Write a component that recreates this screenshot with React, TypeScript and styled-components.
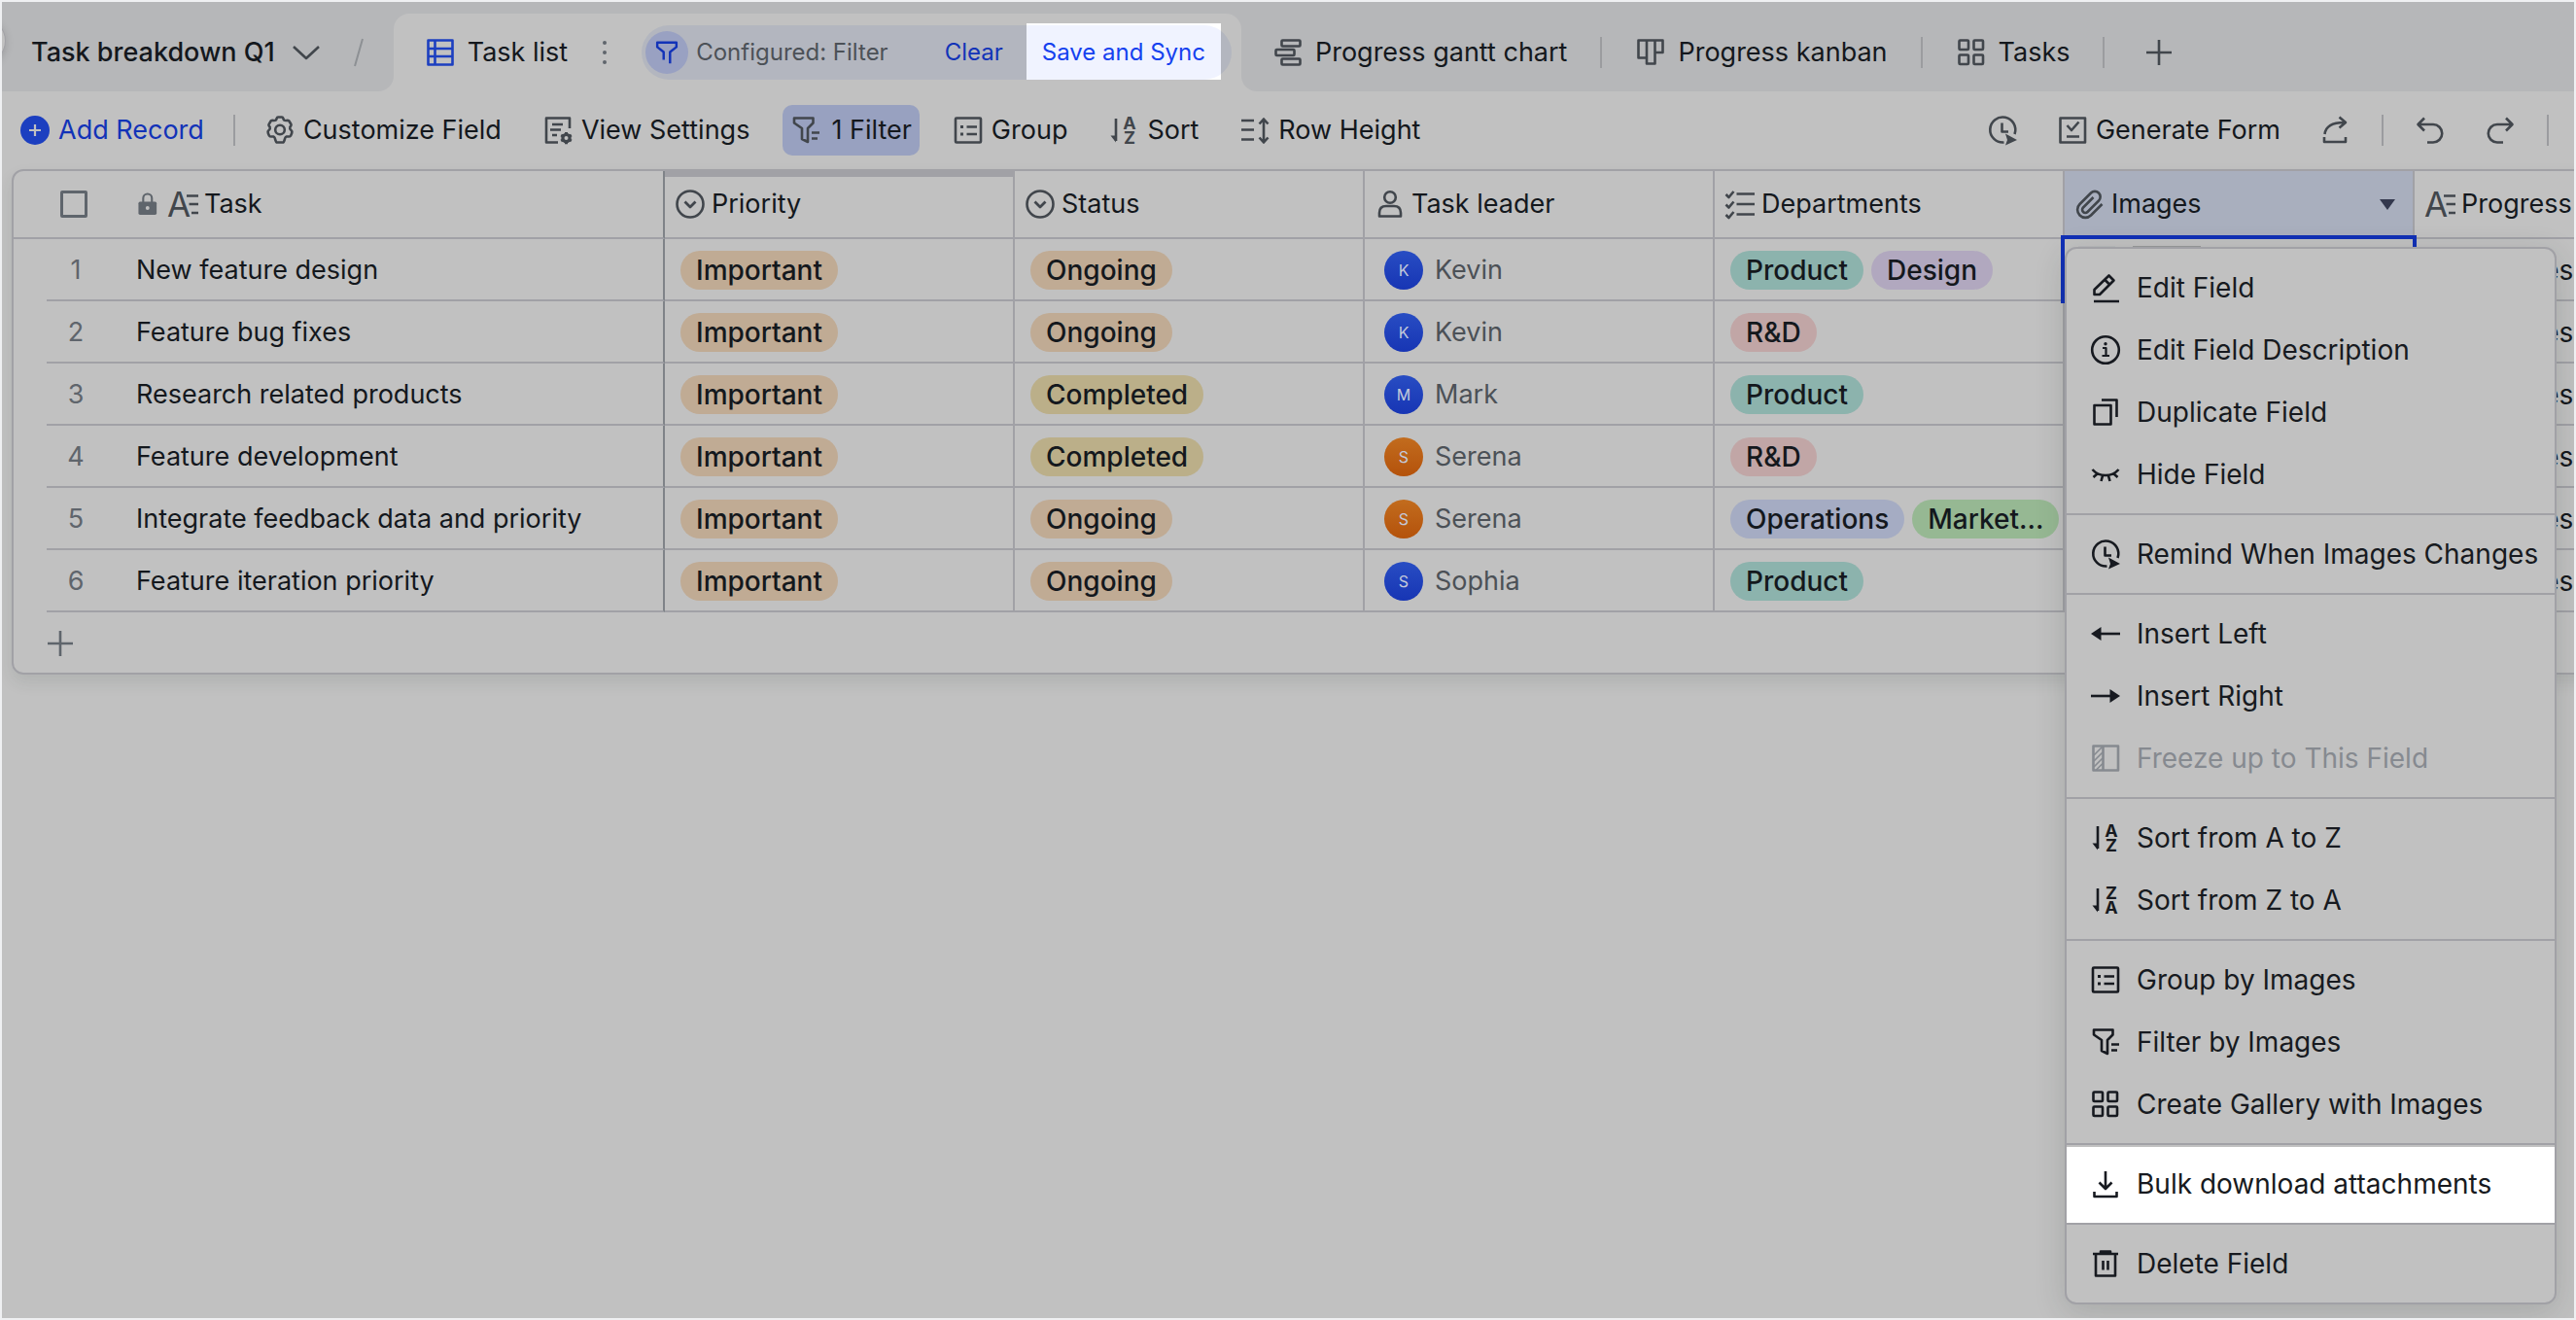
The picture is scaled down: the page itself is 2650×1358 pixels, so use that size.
import React from 'react';
import styled, { createGlobalStyle, css } from 'styled-components';

const c = {
  page: '#c1c1c1',
  bar: '#b6b7b9',
  line: '#a1a1a6',
  lineStrong: '#7f8388',
  text: '#14181d',
  muted: '#4c5157',
  icon: '#41464c',
  faint: '#5f656c',
  blue: '#1233b8',
  disabled: '#868a90',
};

const GlobalStyle = createGlobalStyle`
  *, *::before, *::after { box-sizing: border-box; }
  body { margin: 0; background: #eff0f2; font-family: Inter, "Liberation Sans", sans-serif; font-size: 27px; line-height: 40px; color: ${c.text}; }
  button { font: inherit; color: inherit; background: none; border: 0; padding: 0; margin: 0; cursor: pointer; }
`;

/* ---------- icons ---------- */

const Svg = styled.svg<{ $size?: number }>`
  display: block;
  flex: none;
  width: ${(p) => p.$size ?? 32}px;
  height: ${(p) => p.$size ?? 32}px;
  overflow: visible;
  fill: none;
  stroke: currentColor;
  stroke-width: 2.6;
  stroke-linejoin: round;
`;

const Glyph = styled.text`
  fill: currentColor;
  stroke: none;
  font-family: Inter, sans-serif;
  text-anchor: middle;
`;

const solid = { fill: 'currentColor', stroke: 'none' };

const shapes: Record<string, React.ReactNode> = {
  chevron: <path d="M3 10l13 12 13-12" />,
  slash: <path d="M20 2l-8 28" strokeWidth="2" />,
  table: <path d="M3.5 3.5h25v25h-25zM10.5 3.5v25M3.5 12h25M3.5 20h25" />,
  dots: (
    <g {...solid}>
      <circle cx="16" cy="6" r="2" />
      <circle cx="16" cy="16" r="2" />
      <circle cx="16" cy="26" r="2" />
    </g>
  ),
  funnel: <path d="M12.5 24v-8.5L5.5 10V5h21v5l-7 5.5V28" />,
  gantt: (
    <g>
      <rect x="9.5" y="3.5" width="19" height="6" rx="1" />
      <rect x="3.5" y="13" width="19" height="6" rx="1" />
      <rect x="9.5" y="22.5" width="19" height="6" rx="1" />
    </g>
  ),
  kanban: <path d="M3.5 3.5h25V16h-8V27.5h-8.5V21.5H3.5zM12 3.5v18M20.5 3.5V16" />,
  grid: (
    <g>
      <rect x="3.5" y="3.5" width="9.5" height="9.5" rx="1" />
      <rect x="18.5" y="3.5" width="9.5" height="9.5" rx="1" />
      <rect x="3.5" y="18.5" width="9.5" height="9.5" rx="1" />
      <rect x="18.5" y="18.5" width="9.5" height="9.5" rx="1" />
    </g>
  ),
  plus: <path d="M16 3v26M3 16h26" />,
  addCircle: (
    <g>
      <circle cx="16" cy="16" r="15" {...solid} />
      <path d="M16 10v12M10 16h12" stroke={c.page} strokeWidth="2.2" />
    </g>
  ),
  gear: (
    <g>
      <path d="M11.800 5.500C12.800 4.500 12.500 2.500 14 2.500h4c1.500 0 1.200 2 2.200 3 1.300 1.100 3.700-.2 5 .8l2.200 3.500c.9 1.500-.9 2-1.200 3.500-.6 2.200 2.200 2.600 2.200 4.200s-.6 2.600-1.400 4.200c-.8 1.400-2.800.6-4.300.9-2.300.5-1.700 5.900-3.700 5.900h-6c-2 0-1.400-5.400-3.700-5.900-1.500-.3-3.500.5-4.300-.9-.8-1.600-1.400-2.600-1.400-4.200s2.800-2 2.200-4.200c-.3-1.500-2.100-2-1.200-3.500l2.200-3.500c1.300-1 3.700.3 5-.8z" />
      <circle cx="16" cy="15.5" r="4.800" />
    </g>
  ),
  viewSettings: (
    <g>
      <path d="M28 14V3.5H4v25h12M10 10h11M8 15.5h11M10 21h5" />
      <circle cx="24.5" cy="24" r="3.600" strokeWidth="3.200" />
      <path
        d="M24.5 18v2M24.5 28v2.200M19.200 21l1.800 1M28 26l1.800 1M19.200 27l1.800-1M28 22l1.800-1"
        strokeWidth="3"
      />
    </g>
  ),
  filter: <path d="M4 3.5h19.5v5L18 14v14l-6-3V14L4 8.500zM22 18.5h8M22 24.5h6" />,
  group: (
    <g>
      <rect x="3" y="3.5" width="26" height="25" rx="1" />
      <path d="M14.5 12.5H25M14.5 20H25" />
      <path d="M8 12.5h3M8 20h3" strokeWidth="3" />
    </g>
  ),
  sortAZ: (
    <g>
      <path d="M8 4v23" />
      <path d="M2.5 21.5h5.5v7z" {...solid} />
      <Glyph x="22" y="15" fontSize="18" fontWeight="700">A</Glyph>
      <Glyph x="22" y="30" fontSize="18" fontWeight="700">Z</Glyph>
    </g>
  ),
  sortZA: (
    <g>
      <path d="M8 4v23" />
      <path d="M2.5 21.5h5.5v7z" {...solid} />
      <Glyph x="22" y="15" fontSize="18" fontWeight="700">Z</Glyph>
      <Glyph x="22" y="30" fontSize="18" fontWeight="700">A</Glyph>
    </g>
  ),
  rowHeight: <path d="M2 6h13M2 15.5h13M2 25.5h13M25 5v23M20.5 9.5 25 4.5l4.5 5M20.5 23.5l4.5 5 4.5-5" />,
  remind: (
    <g>
      <path d="M28.5 20a13 13 0 1 0-11 8.500M15.5 8.500v9H22" />
      <path d="M19 19.5 31 26l-12 5.5 2-5.500z" {...solid} />
    </g>
  ),
  form: <path d="M3.5 3.5h25.5v25H3.500zM10.5 11l4.5 5 7.5-8.500M10 22.5h13" />,
  share: <path d="M5 23v5h22v-5M5.5 20c1-8 7.5-12 20-12M20.5 2.5l6.5 5.5-6.5 5.5" />,
  undo: <path d="M10 3.5 3.5 10l6.5 6.5M4 10h15a9 9 0 0 1 0 18.5h-6" />,
  redo: <path d="M22 3.5 28.5 10 22 16.5M28 10H13a9 9 0 0 0 0 18.5h6" />,
  lock: (
    <g color={c.faint}>
      <rect x="3" y="13" width="23" height="16.5" rx="2" {...solid} />
      <path d="M9 14V8.500a5.5 5.5 0 0 1 11 0V14" />
      <circle cx="14.5" cy="21" r="2.400" fill={c.page} stroke="none" />
    </g>
  ),
  text: (
    <g>
      <Glyph x="12" y="28.5" fontSize="35">A</Glyph>
      <path d="M20 7.500h12M22.500 16h9.500M25 25h7" />
    </g>
  ),
  select: (
    <g>
      <circle cx="16" cy="16" r="13.5" />
      <path d="M10.5 13.5 16 19l5.5-5.5" strokeWidth="2.8" />
    </g>
  ),
  person: (
    <g>
      <circle cx="16" cy="9" r="5.800" />
      <path d="M5 28.5V25c0-5 3-7 7-7h8c4 0 7 2 7 7v3.500z" />
    </g>
  ),
  checks: (
    <path d="M12.5 5.5H31M12.5 16H31M12.5 26.5H31M1.5 6l3 3L9.5 3M1.5 16.5l3 3 5-6M1.5 27l3 3 5-6" />
  ),
  clip: (
    <path d="M28.5 16 17 27.5a8 8 0 0 1-11.5-11.5L17 4.500a5.600 5.600 0 0 1 8 8L13.5 24a3 3 0 0 1-4.5-4.5L19.5 9" />
  ),
  caret: <path d="M8 11h16l-8 11z" {...solid} />,
  edit: <path d="M4 30h26M4.5 18 19.5 3.5l5 5L10 23H4.500zM15.5 8l5 5" />,
  info: (
    <g>
      <circle cx="16" cy="16" r="13.800" />
      <path d="M13 14h3.500v8M12.5 22h7.500" strokeWidth="2.2" />
      <circle cx="16" cy="9.800" r="1.700" {...solid} />
    </g>
  ),
  duplicate: <path d="M4.5 9h17v19.5h-17zM12 3.5h15.5V21" />,
  hide: <path d="M2.5 11c7 8 20 8 27 0M8 15l-4.5 4M24 15l4.5 4M13 17.5l-1.5 5.5M19 17.5l1.5 5.5" />,
  left: (
    <g>
      <path d="M10 16h21" />
      <path d="M1 16 11.5 9v14z" {...solid} />
    </g>
  ),
  right: (
    <g>
      <path d="M1 16h21" />
      <path d="M31 16 20.5 9v14z" {...solid} />
    </g>
  ),
  freeze: (
    <g>
      <path d="M3.5 3.5h25.5v25H3.500zM13.5 3.500v25" />
      <path d="M4 13l9-9M4 19l9-9M4 25l9-9M6 28.5l7-7" strokeWidth="1.600" />
    </g>
  ),
  download: <path d="M16 3v18M9.5 14.5 16 21l6.5-6.5M4.5 24v5h23v-5" />,
  trash: <path d="M3 6h26M11 5V3.5h10V5M6 6.500v22h20v-22M13.5 13v9.500M18.5 13v9.500" />,
};

const Icon = ({ name, size }: { name: string; size?: number }) => (
  <Svg viewBox="0 0 32 32" $size={size} aria-hidden="true">
    {shapes[name]}
  </Svg>
);

/* ---------- frame and view tabs ---------- */

const Frame = styled.main`
  min-height: 100vh;
  border: 2px solid #eff0f2;
  background: ${c.page};
  overflow: hidden;
`;

const Header = styled.header`
  display: flex;
  height: 92px;
  border-top: 12px solid ${c.bar};
  white-space: nowrap;
`;

const TitleArea = styled.div`
  position: relative;
  display: flex;
  align-items: center;
  gap: 22px;
  padding: 0 20px 0 30px;
  background: ${c.bar};
  border-radius: 0 0 16px 0;
  color: #8d9094;
`;

const CollapseKnob = styled.span`
  position: absolute;
  left: -44px;
  top: 4px;
  width: 48px;
  height: 48px;
  border-radius: 50%;
  background: ${c.page};
  border: 1px solid ${c.line};
  box-shadow: 0 2px 8px rgba(0, 0, 0, 0.15);
`;

const TitleButton = styled.button`
  display: flex;
  align-items: center;
  gap: 16px;
  font-weight: 500;
  color: ${c.text};
  svg { color: ${c.icon}; }
`;

const TabSlot = styled.div`
  background: linear-gradient(${c.bar} 50%, ${c.page} 50%);
`;

const ActiveTab = styled.div`
  display: flex;
  align-items: center;
  height: 100%;
  padding: 0 10px 0 32px;
  background: ${c.page};
  border-radius: 16px 16px 0 0;
`;

const ViewButton = styled.button<{ $active?: boolean }>`
  display: flex;
  align-items: center;
  gap: 12px;
  svg { color: ${(p) => (p.$active ? '#1c3fc0' : c.icon)}; }
`;

const MoreButton = styled.button`
  margin: 0 22px;
  color: ${c.faint};
`;

const Pill = styled.div`
  display: flex;
  align-items: center;
  height: 56px;
  padding: 0 11px 0 4px;
  border-radius: 28px;
  background: #b3b6bf;
  font-size: 24px;
  color: ${c.muted};
`;

const PillBadge = styled.span`
  display: grid;
  place-items: center;
  width: 44px;
  height: 44px;
  margin-right: 8px;
  border-radius: 50%;
  background: #99a1c2;
  color: ${c.blue};
`;

const ClearButton = styled.button`
  margin: 0 24px 0 58px;
  color: ${c.blue};
`;

const SaveButton = styled.button`
  position: relative;
  isolation: isolate;
  overflow: hidden;
  height: 58px;
  margin-top: -2px;
  padding: 2px 16px 0;
  background: #fff;
  color: #1541ef;
  &::before {
    content: '';
    position: absolute;
    z-index: -1;
    inset: 2px -11px 0 0;
    border-radius: 0 28px 28px 0;
    background: #f0f3ff;
  }
`;

const OtherTabs = styled.nav`
  flex: 1;
  display: flex;
  align-items: center;
  gap: 34px;
  padding-left: 32px;
  background: ${c.bar};
  border-radius: 0 0 0 16px;
`;

const Rule = styled.span`
  flex: none;
  width: 2px;
  height: 32px;
  background: #9b9c9f;
`;

const AddView = styled.button`
  margin-left: 6px;
  color: ${c.icon};
`;

/* ---------- toolbar ---------- */

const Toolbar = styled.div`
  display: flex;
  align-items: center;
  gap: 26px;
  height: 80px;
  padding: 0 26px 0 10px;
  white-space: nowrap;
`;

const Spacer = styled.span`
  flex: 1;
`;

const Tool = styled.button<{ $tone?: 'primary' | 'active' }>`
  display: flex;
  align-items: center;
  gap: 8px;
  height: 52px;
  padding: 0 8px;
  border-radius: 10px;
  svg { color: ${c.icon}; }
  ${(p) => p.$tone === 'primary' && css`
    color: ${c.blue};
    svg { color: #1c3fc0; }
  `}
  ${(p) => p.$tone === 'active' && css`
    gap: 10px;
    background: #98a1c0;
  `}
`;

const ToolGroup = styled.div<{ $tight?: boolean }>`
  display: flex;
  align-items: center;
  gap: ${(p) => (p.$tight ? 22 : 24)}px;
`;

/* ---------- grid ---------- */

const Sheet = styled.section`
  width: max-content;
  min-width: 100%;
  margin-left: 10px;
  border: 2px solid ${c.line};
  border-radius: 12px;
  box-shadow: 0 8px 16px rgba(40, 60, 50, 0.1);
`;

const Grid = styled.table`
  table-layout: fixed;
  width: 2830px;
  border-collapse: separate;
  border-spacing: 0;
`;

const IndexCol = styled.col`
  width: 94px;
`;
const TaskCol = styled.col`
  width: 576px;
`;
const FieldCol = styled.col`
  width: 360px;
`;

const Th = styled.th<{ $frozen?: boolean; $handle?: boolean; $selected?: boolean }>`
  position: relative;
  height: 70px;
  padding: 0 0 0 ${(p) => (p.$frozen ? 32 : 10)}px;
  border-right: 2px solid ${(p) => (p.$frozen ? c.lineStrong : c.line)};
  border-bottom: 2px solid ${c.line};
  font-weight: 400;
  text-align: left;
  ${(p) => p.$handle && css`box-shadow: inset 0 6px 0 ${c.line};`}
  ${(p) => p.$selected && css`background: #a9afbe;`}
`;

const IndexTh = styled.th`
  height: 70px;
  padding: 0 0 0 48px;
  border-bottom: 2px solid ${c.line};
`;

const SelectAll = styled.input`
  appearance: none;
  display: block;
  width: 28px;
  height: 28px;
  margin: 0;
  border: 3px solid ${c.faint};
  border-radius: 2px;
`;

const FieldName = styled.div`
  display: flex;
  align-items: center;
  gap: 6px;
  color: ${c.text};
  svg { color: ${c.icon}; }
`;

const FieldMenuButton = styled.button`
  margin-left: auto;
  padding-right: 10px;
  svg { color: #33384d; }
`;

const IndexTd = styled.td`
  height: 64px;
  padding: 0 0 0 34px;
`;

const IndexNumber = styled.div`
  display: flex;
  align-items: center;
  justify-content: center;
  height: 64px;
  padding-top: 2px;
  border-bottom: 2px solid ${c.line};
  color: ${c.faint};
`;

const Td = styled.td<{ $frozen?: boolean; $selected?: boolean }>`
  height: 64px;
  padding: 2px 0 0 ${(p) => (p.$frozen ? 32 : 16)}px;
  border-right: 2px solid ${(p) => (p.$frozen ? c.lineStrong : c.line)};
  border-bottom: 2px solid ${c.line};
  white-space: nowrap;
  ${(p) => p.$selected && css`
    position: relative;
    &::after {
      content: '';
      position: absolute;
      inset: -4px;
      border: 4px solid #1130b6;
    }
  `}
`;

const ProgressTd = styled(Td)`
  font-size: 28px;
`;

const tones = {
  orange: '#c0ab94',
  yellow: '#bbaf89',
  teal: '#8cb3ad',
  purple: '#b1a8bf',
  red: '#c1a6a6',
  indigo: '#a5acc3',
  green: '#96b893',
};
type Tone = keyof typeof tones;

const ChipList = styled.div`
  display: flex;
  gap: 8px;
`;

const Chip = styled.span<{ $tone: Tone }>`
  height: 40px;
  padding: 0 16px;
  border-radius: 20px;
  background: ${(p) => tones[p.$tone]};
  font-size: 28px;
  font-weight: 500;
`;

const Person = styled.div`
  display: flex;
  align-items: center;
  gap: 12px;
  padding-left: 4px;
  color: ${c.muted};
`;

const Avatar = styled.span<{ $warm?: boolean }>`
  display: grid;
  place-items: center;
  width: 40px;
  height: 40px;
  border-radius: 50%;
  background: ${(p) => (p.$warm ? 'linear-gradient(#c26c1e, #b4520b)' : 'linear-gradient(#284dc3, #1735b4)')};
  color: #c3c9da;
  font-size: 16px;
`;

const Thumbs = styled.div`
  display: flex;
  gap: 18px;
  margin-left: -2px;
`;

const Thumb = styled.span<{ $wide?: boolean }>`
  width: ${(p) => (p.$wide ? 70 : 38)}px;
  height: 50px;
  background: ${(p) => (p.$wide ? '#98999b' : '#b7b9bb')};
`;

const AddRow = styled.button`
  display: block;
  height: 62px;
  padding: 2px 32px 0;
  color: ${c.faint};
`;

/* ---------- field menu ---------- */

const Menu = styled.div`
  position: absolute;
  z-index: 5;
  top: calc(100% + 10px);
  left: 0;
  width: 506px;
  border: 2px solid ${c.line};
  border-radius: 12px;
  background: ${c.page};
  box-shadow: 0 8px 32px rgba(30, 45, 40, 0.16);
  color: ${c.text};
  font-size: 28px;
`;

const MenuGroup = styled.div<{ $lit?: boolean }>`
  padding: 8px 0;
  & + & { border-top: 2px solid ${c.line}; }
  ${(p) => p.$lit && css`
    background: #fff;
    box-shadow: inset 0 2px 0 ${c.page};
  `}
`;

const MenuItem = styled.button`
  display: flex;
  align-items: center;
  gap: 16px;
  width: 100%;
  height: 64px;
  padding: 0 24px;
  white-space: nowrap;
  color: #171a20;
  &:disabled { color: ${c.disabled}; }
`;

/* ---------- data ---------- */

const rows: {
  task: string;
  status: 'Ongoing' | 'Completed';
  leader: string;
  departments: [string, Tone][];
}[] = [
  { task: 'New feature design', status: 'Ongoing', leader: 'Kevin', departments: [['Product', 'teal'], ['Design', 'purple']] },
  { task: 'Feature bug fixes', status: 'Ongoing', leader: 'Kevin', departments: [['R&D', 'red']] },
  { task: 'Research related products', status: 'Completed', leader: 'Mark', departments: [['Product', 'teal']] },
  { task: 'Feature development', status: 'Completed', leader: 'Serena', departments: [['R&D', 'red']] },
  { task: 'Integrate feedback data and priority', status: 'Ongoing', leader: 'Serena', departments: [['Operations', 'indigo'], ['Market...', 'green']] },
  { task: 'Feature iteration priority', status: 'Ongoing', leader: 'Sophia', departments: [['Product', 'teal']] },
];

const menu: [string, string][][] = [
  [['edit', 'Edit Field'], ['info', 'Edit Field Description'], ['duplicate', 'Duplicate Field'], ['hide', 'Hide Field']],
  [['remind', 'Remind When Images Changes']],
  [['left', 'Insert Left'], ['right', 'Insert Right'], ['freeze', 'Freeze up to This Field']],
  [['sortAZ', 'Sort from A to Z'], ['sortZA', 'Sort from Z to A']],
  [['group', 'Group by Images'], ['filter', 'Filter by Images'], ['grid', 'Create Gallery with Images']],
  [['download', 'Bulk download attachments']],
  [['trash', 'Delete Field']],
];

const FieldMenu = () => (
  <Menu role="menu">
    {menu.map((items) => (
      <MenuGroup key={items[0][1]} $lit={items[0][0] === 'download'}>
        {items.map(([icon, label]) => (
          <MenuItem key={label} role="menuitem" disabled={icon === 'freeze'}>
            <Icon name={icon} />
            {label}
          </MenuItem>
        ))}
      </MenuGroup>
    ))}
  </Menu>
);

export default function App() {
  return (
    <>
      <GlobalStyle />
      <Frame>
        <Header>
          <TitleArea>
            <CollapseKnob />
            <TitleButton>
              Task breakdown Q1
              <Icon name="chevron" />
            </TitleButton>
            <Icon name="slash" />
          </TitleArea>
          <TabSlot>
            <ActiveTab>
              <ViewButton $active>
                <Icon name="table" />
                Task list
              </ViewButton>
              <MoreButton aria-label="View options">
                <Icon name="dots" />
              </MoreButton>
              <Pill>
                <PillBadge>
                  <Icon name="funnel" size={30} />
                </PillBadge>
                Configured: Filter
                <ClearButton>Clear</ClearButton>
                <SaveButton>Save and Sync</SaveButton>
              </Pill>
            </ActiveTab>
          </TabSlot>
          <OtherTabs>
            <ViewButton>
              <Icon name="gantt" />
              Progress gantt chart
            </ViewButton>
            <Rule />
            <ViewButton>
              <Icon name="kanban" />
              Progress kanban
            </ViewButton>
            <Rule />
            <ViewButton>
              <Icon name="grid" />
              Tasks
            </ViewButton>
            <Rule />
            <AddView aria-label="Add view">
              <Icon name="plus" />
            </AddView>
          </OtherTabs>
        </Header>

        <Toolbar>
          <ToolGroup $tight>
            <Tool $tone="primary"><Icon name="addCircle" />Add Record</Tool>
            <Rule />
            <Tool><Icon name="gear" />Customize Field</Tool>
          </ToolGroup>
          <Tool><Icon name="viewSettings" />View Settings</Tool>
          <Tool $tone="active"><Icon name="filter" />1 Filter</Tool>
          <Tool><Icon name="group" />Group</Tool>
          <Tool><Icon name="sortAZ" />Sort</Tool>
          <Tool><Icon name="rowHeight" />Row Height</Tool>
          <Spacer />
          <ToolGroup>
            <Tool aria-label="Reminders"><Icon name="remind" /></Tool>
            <Tool><Icon name="form" />Generate Form</Tool>
            <Tool aria-label="Share"><Icon name="share" /></Tool>
            <Rule />
            <Tool aria-label="Undo"><Icon name="undo" /></Tool>
            <Tool aria-label="Redo"><Icon name="redo" /></Tool>
            <Rule />
          </ToolGroup>
        </Toolbar>

        <Sheet>
          <Grid>
            <colgroup>
              <IndexCol />
              <TaskCol />
              <FieldCol span={6} />
            </colgroup>
            <thead>
              <tr>
                <IndexTh>
                  <SelectAll type="checkbox" aria-label="Select all records" />
                </IndexTh>
                <Th $frozen>
                  <FieldName><Icon name="lock" size={26} /><Icon name="text" />Task</FieldName>
                </Th>
                <Th $handle><FieldName><Icon name="select" />Priority</FieldName></Th>
                <Th><FieldName><Icon name="select" />Status</FieldName></Th>
                <Th><FieldName><Icon name="person" />Task leader</FieldName></Th>
                <Th><FieldName><Icon name="checks" />Departments</FieldName></Th>
                <Th $selected>
                  <FieldName>
                    <Icon name="clip" />
                    Images
                    <FieldMenuButton aria-label="Field options"><Icon name="caret" /></FieldMenuButton>
                  </FieldName>
                  <FieldMenu />
                </Th>
                <Th><FieldName><Icon name="text" />Progress</FieldName></Th>
              </tr>
            </thead>
            <tbody>
              {rows.map((row, i) => (
                <tr key={row.task}>
                  <IndexTd><IndexNumber>{i + 1}</IndexNumber></IndexTd>
                  <Td $frozen>{row.task}</Td>
                  <Td><ChipList><Chip $tone="orange">Important</Chip></ChipList></Td>
                  <Td>
                    <ChipList>
                      <Chip $tone={row.status === 'Ongoing' ? 'orange' : 'yellow'}>{row.status}</Chip>
                    </ChipList>
                  </Td>
                  <Td>
                    <Person>
                      <Avatar $warm={row.leader === 'Serena'}>{row.leader[0]}</Avatar>
                      {row.leader}
                    </Person>
                  </Td>
                  <Td>
                    <ChipList>
                      {row.departments.map(([name, tone]) => (
                        <Chip key={name} $tone={tone}>{name}</Chip>
                      ))}
                    </ChipList>
                  </Td>
                  <Td $selected={i === 0}>
                    {i === 0 && <Thumbs><Thumb /><Thumb $wide /></Thumbs>}
                  </Td>
                  <ProgressTd>All updates</ProgressTd>
                </tr>
              ))}
            </tbody>
          </Grid>
          <AddRow aria-label="Add record"><Icon name="plus" /></AddRow>
        </Sheet>
      </Frame>
    </>
  );
}
